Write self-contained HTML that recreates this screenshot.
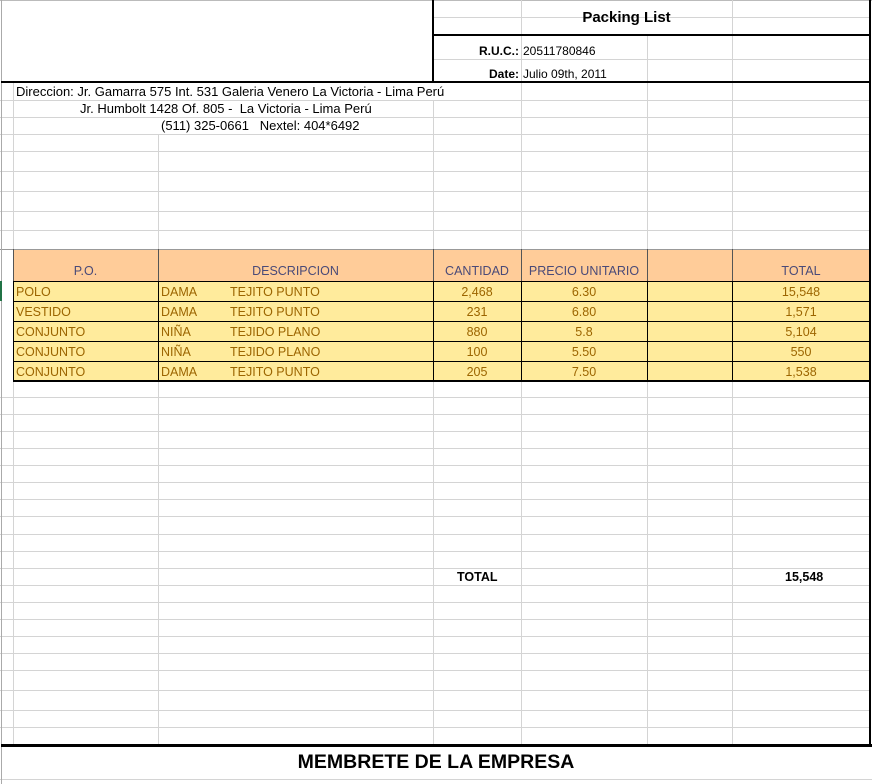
<!DOCTYPE html>
<html><head><meta charset="utf-8">
<style>
*{margin:0;padding:0;box-sizing:border-box}
body{width:872px;height:784px;background:#fff;position:relative;overflow:hidden;font-family:"Liberation Sans",Arial,sans-serif}
.h{position:absolute;height:1px;background:#d4d4d4}
.v{position:absolute;width:1px;background:#d4d4d4}
.k{background:#000}
.t{position:absolute;font-size:12px;line-height:14px;color:#000;white-space:nowrap}
.c{position:absolute;font-size:12.5px;line-height:20px;color:#9c6500;white-space:nowrap}
.hd{color:#4a4a78}
.b{font-weight:bold}
.w{position:absolute;background:#fff}
</style></head><body>
<!-- fills -->
<div style="position:absolute;left:13px;top:249px;width:858px;height:32px;background:#ffcc99"></div>
<div style="position:absolute;left:13px;top:281px;width:858px;height:100px;background:#ffeb9c"></div>

<!-- gray horizontals -->
<div class="h" style="left:0;top:0;width:872px;background:#bbb"></div>
<div class="h" style="left:433px;top:17px;width:438px"></div>
<div class="h" style="left:433px;top:59px;width:438px"></div>
<div class="h" style="left:0;top:100px;width:871px"></div>
<div class="h" style="left:0;top:117px;width:871px"></div>
<div class="h" style="left:0;top:134px;width:871px"></div>
<div class="h" style="left:0;top:151px;width:871px"></div>
<div class="h" style="left:0;top:171px;width:871px"></div>
<div class="h" style="left:0;top:191px;width:871px"></div>
<div class="h" style="left:0;top:211px;width:871px"></div>
<div class="h" style="left:0;top:230px;width:871px"></div>
<div class="h" style="left:0;top:249px;width:871px;background:#999"></div>
<div class="h" style="left:0;top:397px;width:871px"></div>
<div class="h" style="left:0;top:414px;width:871px"></div>
<div class="h" style="left:0;top:431px;width:871px"></div>
<div class="h" style="left:0;top:448px;width:871px"></div>
<div class="h" style="left:0;top:465px;width:871px"></div>
<div class="h" style="left:0;top:482px;width:871px"></div>
<div class="h" style="left:0;top:499px;width:871px"></div>
<div class="h" style="left:0;top:516px;width:871px"></div>
<div class="h" style="left:0;top:534px;width:871px"></div>
<div class="h" style="left:0;top:551px;width:871px"></div>
<div class="h" style="left:0;top:568px;width:871px"></div>
<div class="h" style="left:0;top:585px;width:871px"></div>
<div class="h" style="left:0;top:602px;width:871px"></div>
<div class="h" style="left:0;top:619px;width:871px"></div>
<div class="h" style="left:0;top:636px;width:871px"></div>
<div class="h" style="left:0;top:653px;width:871px"></div>
<div class="h" style="left:0;top:670px;width:871px"></div>
<div class="h" style="left:0;top:690px;width:871px"></div>
<div class="h" style="left:0;top:710px;width:871px"></div>
<div class="h" style="left:0;top:727px;width:871px"></div>
<div class="h" style="left:0;top:779px;width:872px"></div>

<!-- gray verticals -->
<div class="v" style="left:1px;top:0;height:784px;background:#aaa"></div>
<div class="v" style="left:13px;top:83px;height:662px"></div>
<div class="v" style="left:158px;top:83px;height:662px"></div>
<div class="v" style="left:433px;top:83px;height:662px"></div>
<div class="v" style="left:521px;top:0;height:745px"></div>
<div class="v" style="left:647px;top:35px;height:710px"></div>
<div class="v" style="left:732px;top:0;height:745px"></div>

<!-- white masks for overflowing address text -->
<div class="w" style="left:14px;top:83px;width:433px;height:17px"></div>
<div class="w" style="left:14px;top:101px;width:419px;height:16px"></div>
<div class="w" style="left:14px;top:118px;width:419px;height:16px"></div>

<!-- table black borders -->
<div class="h k" style="left:13px;top:281px;width:858px"></div>
<div class="h k" style="left:13px;top:301px;width:858px"></div>
<div class="h k" style="left:13px;top:321px;width:858px"></div>
<div class="h k" style="left:13px;top:341px;width:858px"></div>
<div class="h k" style="left:13px;top:361px;width:858px"></div>
<div class="h k" style="left:13px;top:380px;width:858px;height:2px"></div>
<div class="v" style="left:13px;top:249px;height:132px;background:#555"></div>
<div class="v" style="left:158px;top:249px;height:132px;background:#555"></div>
<div class="v" style="left:433px;top:249px;height:132px;background:#555"></div>
<div class="v" style="left:521px;top:249px;height:132px;background:#555"></div>
<div class="v" style="left:647px;top:249px;height:132px;background:#555"></div>
<div class="v" style="left:732px;top:249px;height:132px;background:#555"></div>
<div class="v k" style="left:13px;top:281px;height:100px"></div>
<div class="v k" style="left:158px;top:281px;height:100px"></div>
<div class="v k" style="left:433px;top:281px;height:100px"></div>
<div class="v k" style="left:521px;top:281px;height:100px"></div>
<div class="v k" style="left:647px;top:281px;height:100px"></div>
<div class="v k" style="left:732px;top:281px;height:100px"></div>
<div style="position:absolute;left:0;top:281px;width:2px;height:20px;background:#217346"></div>

<!-- thick black frame -->
<div class="h k" style="left:433px;top:34px;width:438px;height:2px"></div>
<div class="h k" style="left:1px;top:81px;width:870px;height:2px"></div>
<div class="v k" style="left:432px;top:0;height:83px;width:2px"></div>
<div class="v k" style="left:869px;top:0;height:745px;width:2px"></div>
<div class="h k" style="left:1px;top:744px;width:871px;height:3px"></div>

<!-- header texts -->
<div class="t b" style="left:521px;width:211px;top:9px;font-size:15px;line-height:17px;text-align:center">Packing List</div>
<div class="t b" style="left:434px;width:85px;top:44px;text-align:right">R.U.C.:</div>
<div class="t" style="left:523px;top:44px">20511780846</div>
<div class="t b" style="left:434px;width:85px;top:67px;text-align:right">Date:</div>
<div class="t" style="left:523px;top:67px">Julio 09th, 2011</div>

<div class="t" style="left:16px;top:85px;font-size:13px;line-height:14px">Direccion: Jr. Gamarra 575 Int. 531 Galeria Venero La Victoria - Lima Perú</div>
<div class="t" style="left:80px;top:102px;font-size:13px;line-height:14px">Jr. Humbolt 1428 Of. 805 -&nbsp; La Victoria - Lima Perú</div>
<div class="t" style="left:161px;top:119px;font-size:13px;line-height:14px">(511) 325-0661&nbsp;&nbsp; Nextel: 404*6492</div>

<!-- table header -->
<div class="c hd" style="left:13px;width:145px;top:261px;text-align:center">P.O.</div>
<div class="c hd" style="left:158px;width:275px;top:261px;text-align:center">DESCRIPCION</div>
<div class="c hd" style="left:433px;width:88px;top:261px;text-align:center">CANTIDAD</div>
<div class="c hd" style="left:521px;width:126px;top:261px;text-align:center">PRECIO UNITARIO</div>
<div class="c hd" style="left:732px;width:138px;top:261px;text-align:center">TOTAL</div>

<!-- rows -->
<div class="c" style="left:16px;top:282px">POLO</div>
<div class="c" style="left:161px;top:282px">DAMA</div><div class="c" style="left:230px;top:282px">TEJITO PUNTO</div>
<div class="c" style="left:433px;width:88px;top:282px;text-align:center">2,468</div>
<div class="c" style="left:521px;width:126px;top:282px;text-align:center">6.30</div>
<div class="c" style="left:732px;width:138px;top:282px;text-align:center">15,548</div>

<div class="c" style="left:16px;top:302px">VESTIDO</div>
<div class="c" style="left:161px;top:302px">DAMA</div><div class="c" style="left:230px;top:302px">TEJITO PUNTO</div>
<div class="c" style="left:433px;width:88px;top:302px;text-align:center">231</div>
<div class="c" style="left:521px;width:126px;top:302px;text-align:center">6.80</div>
<div class="c" style="left:732px;width:138px;top:302px;text-align:center">1,571</div>

<div class="c" style="left:16px;top:322px">CONJUNTO</div>
<div class="c" style="left:161px;top:322px">NIÑA</div><div class="c" style="left:230px;top:322px">TEJIDO PLANO</div>
<div class="c" style="left:433px;width:88px;top:322px;text-align:center">880</div>
<div class="c" style="left:521px;width:126px;top:322px;text-align:center">5.8</div>
<div class="c" style="left:732px;width:138px;top:322px;text-align:center">5,104</div>

<div class="c" style="left:16px;top:342px">CONJUNTO</div>
<div class="c" style="left:161px;top:342px">NIÑA</div><div class="c" style="left:230px;top:342px">TEJIDO PLANO</div>
<div class="c" style="left:433px;width:88px;top:342px;text-align:center">100</div>
<div class="c" style="left:521px;width:126px;top:342px;text-align:center">5.50</div>
<div class="c" style="left:732px;width:138px;top:342px;text-align:center">550</div>

<div class="c" style="left:16px;top:362px">CONJUNTO</div>
<div class="c" style="left:161px;top:362px">DAMA</div><div class="c" style="left:230px;top:362px">TEJITO PUNTO</div>
<div class="c" style="left:433px;width:88px;top:362px;text-align:center">205</div>
<div class="c" style="left:521px;width:126px;top:362px;text-align:center">7.50</div>
<div class="c" style="left:732px;width:138px;top:362px;text-align:center">1,538</div>

<!-- totals -->
<div class="t b" style="left:457px;top:570px;font-size:12.5px">TOTAL</div>
<div class="t b" style="left:785px;top:570px;font-size:12.5px">15,548</div>

<div class="t b" style="left:0;width:872px;top:751px;font-size:19.5px;line-height:22px;text-align:center">MEMBRETE DE LA EMPRESA</div>
</body></html>
